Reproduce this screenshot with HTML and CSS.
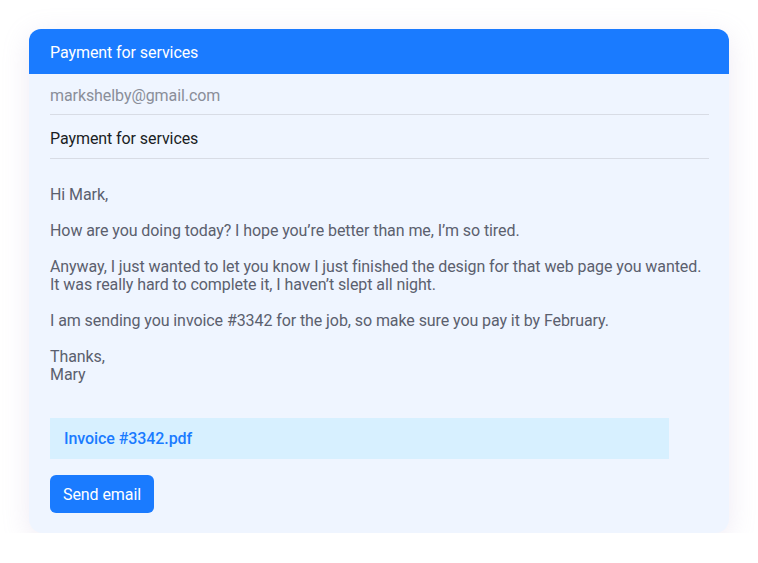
FILE: index.html
```html
<!DOCTYPE html>
<html lang="en">
<head>
  <meta charset="UTF-8">
  <meta name="viewport" content="width=device-width, initial-scale=1.0">
  <title>Payment for services</title>
  <link rel="stylesheet" href="styles.css">
</head>
<body>
  <div class="mail-card">
    <div class="mail-header">Payment for services</div>
    <div class="mail-content">
      <div class="field field-to">markshelby@gmail.com</div>
      <div class="field field-subject">Payment for services</div>
      <div class="mail-body">
        <p>Hi Mark,</p>
        <p>How are you doing today? I hope you’re better than me, I’m so tired.</p>
        <p>Anyway, I just wanted to let you know I just finished the design for that web page you wanted.<br>It was really hard to complete it, I haven’t slept all night.</p>
        <p>I am sending you invoice #3342 for the job, so make sure you pay it by February.</p>
        <p>Thanks,<br>Mary</p>
      </div>
      <div class="attachment">Invoice #3342.pdf</div>
      <button class="send-btn">Send email</button>
    </div>
  </div>
</body>
</html>
```

FILE: styles.css
```css
body {
  margin: 0;
  padding: 29px 0 0 29px;
  background: #fff;
  font-family: Roboto, "Liberation Sans", sans-serif;
  letter-spacing: -0.08px;
}

.mail-card {
  width: 700px;
  background: #eff5ff;
  border-radius: 12px 12px 14px 14px;
  overflow: hidden;
  box-shadow: 0 6px 28px rgba(170, 150, 200, 0.2);
}

.mail-header {
  height: 45px;
  box-sizing: border-box;
  padding: 14px 21px 0;
  background: #1a7bff;
  color: #fff;
  font-size: 16px;
  line-height: 20px;
}

.mail-content {
  padding: 0 20px 20px 21px;
}

.field {
  font-size: 16px;
  line-height: 20px;
  border-bottom: 1px solid #d8dce5;
}

.field-to {
  padding: 12px 0 8px;
  color: #8a8e99;
}

.field-subject {
  padding: 14px 0 9px;
  color: #1a1d24;
}

.mail-body {
  padding-top: 27px;
  color: #5b606e;
  font-size: 16px;
  line-height: 18px;
}

.mail-body p {
  margin: 0 0 18px;
}

.mail-body p:last-child {
  margin-bottom: 0;
}

.attachment {
  margin-top: 34px;
  width: 619px;
  height: 41px;
  box-sizing: border-box;
  padding: 0 14px;
  background: #d7f0ff;
  color: #1a7bff;
  font-weight: 500;
  font-size: 16px;
  line-height: 41px;
}

.send-btn {
  margin-top: 16px;
  height: 38px;
  padding: 0 13px;
  border: none;
  border-radius: 6px;
  background: #1a7bff;
  color: #fff;
  font-family: inherit;
  font-size: 16px;
  letter-spacing: inherit;
  cursor: pointer;
}
```
